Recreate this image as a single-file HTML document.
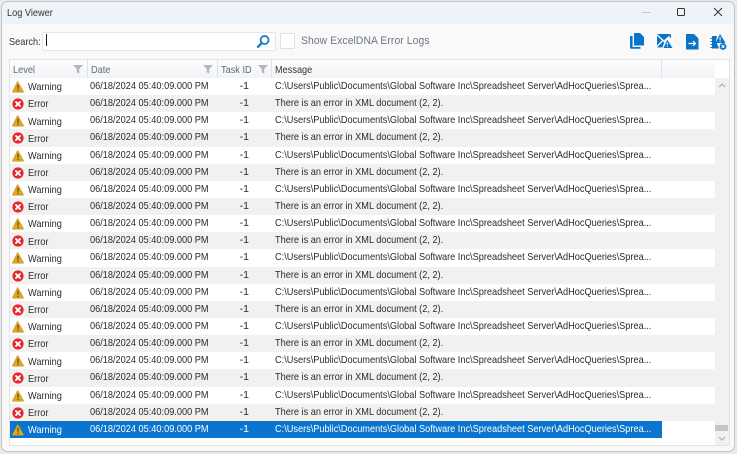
<!DOCTYPE html>
<html><head><meta charset="utf-8"><style>
html,body{margin:0;padding:0;width:737px;height:454px;overflow:hidden;background:#e9e9e9}
*{box-sizing:border-box}
body{font-family:"Liberation Sans",sans-serif;font-size:10.5px;color:#2a2a2a;position:relative}
#win{position:absolute;left:1px;top:1px;width:734px;height:451px;background:#f9f9f9;border:1px solid #c4c4c4;border-radius:7px;overflow:hidden}
#tb{position:absolute;left:0;top:0;width:100%;height:22px;background:#eef3fa}
.a{position:absolute}
.sx{transform:scaleX(.875);transform-origin:0 0;white-space:nowrap}
.r{position:absolute;left:10px;width:652px;height:17.14px;background:#fff}
.r.e{background:#f2f1f0;width:705px}
.r.s{background:#0a74cf;color:#fff}
.r span{position:absolute;top:2px;white-space:nowrap;line-height:13px}
.r .l,.r .d,.r .m{transform:scaleX(.875);transform-origin:0 0}
.r .l{left:18px;top:3.3px}.r .d{left:80px}.r .t{left:226px;width:13px;text-align:right}.r .m{left:265px}
.r svg{position:absolute;left:2px;top:3px}
.h{position:absolute;top:60px;height:18px;background:linear-gradient(#fdfdfd,#f1f3f6);border-right:1px solid #dfe3e8;color:#5f6a7a;line-height:20px;padding-left:3px;white-space:nowrap}
.h b{font-weight:normal;display:inline-block;transform:scaleX(.875);transform-origin:0 0}
.h svg{position:absolute;top:4px}
</style></head><body>
<svg width="0" height="0" style="position:absolute"><defs>
<symbol id="w" viewBox="0 0 12 12"><path d="M6 .6 11.6 10.6Q11.8 11.4 11 11.4H1Q.2 11.4.4 10.6L5.2 1Q5.6.3 6 .6Z" fill="#dfa820" stroke="#b98a18" stroke-width=".4"/><path d="M5.4 3.8h1.2l-.2 4.2h-.8zM5.4 8.9h1.2v1.2H5.4z" fill="#4a3a10"/></symbol>
<symbol id="x" viewBox="0 0 12 12"><circle cx="6" cy="6" r="5.6" fill="#e02a30"/><path d="M4 4 8 8M8 4 4 8" stroke="#fff" stroke-width="1.9" stroke-linecap="round"/></symbol>
<symbol id="f" viewBox="0 0 10 10"><path d="M0 1H10L6.2 5V9.6L3.8 8.2V5Z" fill="#b3b6ba"/></symbol>
</defs></svg>
<div id="win"><div id="tb"></div></div>
<div class="a sx" style="left:7px;top:7px;font-size:10.5px;color:#333">Log Viewer</div>
<div class="a" style="left:642px;top:12px;width:9px;height:1px;background:#c8ccd2"></div>
<div class="a" style="left:677px;top:8px;width:8px;height:8px;border:1.2px solid #333;border-radius:1.5px"></div>
<svg class="a" style="left:713px;top:7px" width="10" height="10"><path d="M1 1 9 9M9 1 1 9" stroke="#333" stroke-width="1"/></svg>
<div class="a sx" style="left:9px;top:36px;font-size:10.5px;color:#333">Search:</div>
<div class="a" style="left:42px;top:32px;width:234px;height:19px;background:#fff;border:1px solid #e6e6e6;border-radius:2px"></div>
<div class="a" style="left:46px;top:34px;width:1px;height:12px;background:#222"></div>
<svg class="a" style="left:256px;top:34px" width="15" height="15"><circle cx="8.6" cy="6" r="4" fill="none" stroke="#0c74c4" stroke-width="1.7"/><path d="M5.8 9 2 12.8" stroke="#0c74c4" stroke-width="2.2" stroke-linecap="round"/></svg>
<div class="a" style="left:280px;top:33px;width:15px;height:16px;background:#fff;border:1px solid #e0e0e0;border-radius:2px"></div>
<div class="a sx" style="left:301px;top:35px;font-size:11.3px;color:#6b7684;letter-spacing:.1px;transform:scaleX(.915)">Show ExcelDNA Error Logs</div>
<svg class="a" style="left:629px;top:33px" width="16" height="16" fill="#0a74c8"><path d="M5 0H11L15 4V12.5H5Z"/><path d="M1 3H3.6V14H11.5V15.8H2.5Q1 15.8 1 14.2Z"/></svg>
<svg class="a" style="left:656px;top:34px" width="17" height="15" fill="#0a74c8"><path d="M1 0H15L8 6.2Z"/><path d="M1 1.8 6 6.3 1 11.5ZM1 13.4 7 7.4 8.2 8.3 6.5 13.4Z"/><path d="M11.2 5.8 16.5 14H7.6Z"/><path d="M13 .8H15V4.4L13.6 3Z"/><path d="M10.8 8.5h1v2.8h-1zM10.8 12h1v1h-1z" fill="#fff"/></svg>
<svg class="a" style="left:685px;top:34px" width="15" height="16" fill="#0a74c8"><path d="M1 0H9L13.5 4.5V15.5H1Z"/><path d="M3.5 9.5H10M8 7.2 10.4 9.5 8 11.8" fill="none" stroke="#fff" stroke-width="1.3"/></svg>
<svg class="a" style="left:710px;top:34px" width="17" height="16" fill="#0a74c8"><path d="M2 2H7L6 7 9 14.5H2Z"/><path d="M.5 4h2v1h-2zM.5 7h2v1h-2zM.5 10h2v1h-2zM.5 13h2v1h-2z"/><path d="M10 0 15.5 9H5.5Z"/><path d="M9.6 3h1v3.5h-1zM9.6 7.2h1v1h-1z" fill="#fff"/><circle cx="13" cy="12.5" r="3.4"/><path d="M11.6 11.1 14.4 13.9M14.4 11.1 11.6 13.9" stroke="#fff"/></svg>

<div class="a" style="left:9px;top:59px;width:721px;height:387px;background:#fff;border:1px solid #e3e3e3"></div>
<div class="h" style="left:10px;width:78px"><b>Level</b><svg style="left:63px" width="10" height="10"><use href="#f"/></svg></div>
<div class="h" style="left:88px;width:130px"><b>Date</b><svg style="left:115px" width="10" height="10"><use href="#f"/></svg></div>
<div class="h" style="left:218px;width:54px"><b>Task ID</b><svg style="left:40px" width="10" height="10"><use href="#f"/></svg></div>
<div class="h" style="left:272px;width:390px;color:#333"><b>Message</b></div>
<div class="h" style="left:662px;width:53px;border-right:0"></div>
<div class="a" style="left:715px;top:78px;width:14px;height:367px;background:#f1f1f1"></div>
<svg class="a" style="left:718px;top:82px" width="8" height="6"><path d="M1 5 4 2 7 5" fill="none" stroke="#b5b5b5" stroke-width="1.3"/></svg>
<div class="a" style="left:715px;top:425px;width:13px;height:6px;background:#c4c4c4"></div>
<svg class="a" style="left:718px;top:436px" width="8" height="6"><path d="M1 1 4 4 7 1" fill="none" stroke="#b5b5b5" stroke-width="1.3"/></svg>

<div class="r" style="top:78px"><svg width="12" height="12"><use href="#w"/></svg><span class="l">Warning</span><span class="d">06/18/2024 05:40:09.000 PM</span><span class="t">-1</span><span class="m">C:\Users\Public\Documents\Global Software Inc\Spreadsheet Server\AdHocQueries\Sprea...</span></div>
<div class="r e" style="top:95.14px"><svg width="12" height="12"><use href="#x"/></svg><span class="l">Error</span><span class="d">06/18/2024 05:40:09.000 PM</span><span class="t">-1</span><span class="m">There is an error in XML document (2, 2).</span></div>
<div class="r" style="top:112.28px"><svg width="12" height="12"><use href="#w"/></svg><span class="l">Warning</span><span class="d">06/18/2024 05:40:09.000 PM</span><span class="t">-1</span><span class="m">C:\Users\Public\Documents\Global Software Inc\Spreadsheet Server\AdHocQueries\Sprea...</span></div>
<div class="r e" style="top:129.42px"><svg width="12" height="12"><use href="#x"/></svg><span class="l">Error</span><span class="d">06/18/2024 05:40:09.000 PM</span><span class="t">-1</span><span class="m">There is an error in XML document (2, 2).</span></div>
<div class="r" style="top:146.56px"><svg width="12" height="12"><use href="#w"/></svg><span class="l">Warning</span><span class="d">06/18/2024 05:40:09.000 PM</span><span class="t">-1</span><span class="m">C:\Users\Public\Documents\Global Software Inc\Spreadsheet Server\AdHocQueries\Sprea...</span></div>
<div class="r e" style="top:163.7px"><svg width="12" height="12"><use href="#x"/></svg><span class="l">Error</span><span class="d">06/18/2024 05:40:09.000 PM</span><span class="t">-1</span><span class="m">There is an error in XML document (2, 2).</span></div>
<div class="r" style="top:180.84px"><svg width="12" height="12"><use href="#w"/></svg><span class="l">Warning</span><span class="d">06/18/2024 05:40:09.000 PM</span><span class="t">-1</span><span class="m">C:\Users\Public\Documents\Global Software Inc\Spreadsheet Server\AdHocQueries\Sprea...</span></div>
<div class="r e" style="top:197.98px"><svg width="12" height="12"><use href="#x"/></svg><span class="l">Error</span><span class="d">06/18/2024 05:40:09.000 PM</span><span class="t">-1</span><span class="m">There is an error in XML document (2, 2).</span></div>
<div class="r" style="top:215.12px"><svg width="12" height="12"><use href="#w"/></svg><span class="l">Warning</span><span class="d">06/18/2024 05:40:09.000 PM</span><span class="t">-1</span><span class="m">C:\Users\Public\Documents\Global Software Inc\Spreadsheet Server\AdHocQueries\Sprea...</span></div>
<div class="r e" style="top:232.26px"><svg width="12" height="12"><use href="#x"/></svg><span class="l">Error</span><span class="d">06/18/2024 05:40:09.000 PM</span><span class="t">-1</span><span class="m">There is an error in XML document (2, 2).</span></div>
<div class="r" style="top:249.4px"><svg width="12" height="12"><use href="#w"/></svg><span class="l">Warning</span><span class="d">06/18/2024 05:40:09.000 PM</span><span class="t">-1</span><span class="m">C:\Users\Public\Documents\Global Software Inc\Spreadsheet Server\AdHocQueries\Sprea...</span></div>
<div class="r e" style="top:266.54px"><svg width="12" height="12"><use href="#x"/></svg><span class="l">Error</span><span class="d">06/18/2024 05:40:09.000 PM</span><span class="t">-1</span><span class="m">There is an error in XML document (2, 2).</span></div>
<div class="r" style="top:283.68px"><svg width="12" height="12"><use href="#w"/></svg><span class="l">Warning</span><span class="d">06/18/2024 05:40:09.000 PM</span><span class="t">-1</span><span class="m">C:\Users\Public\Documents\Global Software Inc\Spreadsheet Server\AdHocQueries\Sprea...</span></div>
<div class="r e" style="top:300.82px"><svg width="12" height="12"><use href="#x"/></svg><span class="l">Error</span><span class="d">06/18/2024 05:40:09.000 PM</span><span class="t">-1</span><span class="m">There is an error in XML document (2, 2).</span></div>
<div class="r" style="top:317.96px"><svg width="12" height="12"><use href="#w"/></svg><span class="l">Warning</span><span class="d">06/18/2024 05:40:09.000 PM</span><span class="t">-1</span><span class="m">C:\Users\Public\Documents\Global Software Inc\Spreadsheet Server\AdHocQueries\Sprea...</span></div>
<div class="r e" style="top:335.1px"><svg width="12" height="12"><use href="#x"/></svg><span class="l">Error</span><span class="d">06/18/2024 05:40:09.000 PM</span><span class="t">-1</span><span class="m">There is an error in XML document (2, 2).</span></div>
<div class="r" style="top:352.24px"><svg width="12" height="12"><use href="#w"/></svg><span class="l">Warning</span><span class="d">06/18/2024 05:40:09.000 PM</span><span class="t">-1</span><span class="m">C:\Users\Public\Documents\Global Software Inc\Spreadsheet Server\AdHocQueries\Sprea...</span></div>
<div class="r e" style="top:369.38px"><svg width="12" height="12"><use href="#x"/></svg><span class="l">Error</span><span class="d">06/18/2024 05:40:09.000 PM</span><span class="t">-1</span><span class="m">There is an error in XML document (2, 2).</span></div>
<div class="r" style="top:386.52px"><svg width="12" height="12"><use href="#w"/></svg><span class="l">Warning</span><span class="d">06/18/2024 05:40:09.000 PM</span><span class="t">-1</span><span class="m">C:\Users\Public\Documents\Global Software Inc\Spreadsheet Server\AdHocQueries\Sprea...</span></div>
<div class="r e" style="top:403.66px"><svg width="12" height="12"><use href="#x"/></svg><span class="l">Error</span><span class="d">06/18/2024 05:40:09.000 PM</span><span class="t">-1</span><span class="m">There is an error in XML document (2, 2).</span></div>
<div class="r s" style="top:420.8px"><svg width="12" height="12"><use href="#w"/></svg><span class="l">Warning</span><span class="d">06/18/2024 05:40:09.000 PM</span><span class="t">-1</span><span class="m">C:\Users\Public\Documents\Global Software Inc\Spreadsheet Server\AdHocQueries\Sprea...</span></div>
</body></html>
